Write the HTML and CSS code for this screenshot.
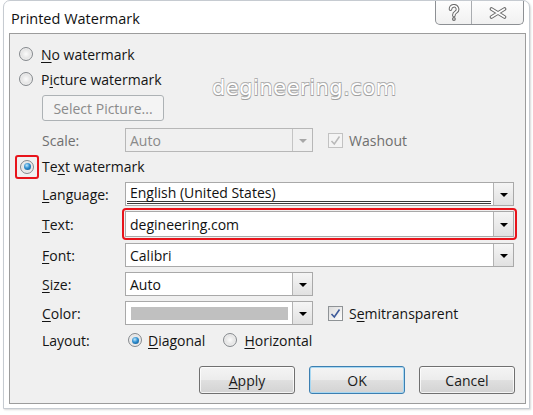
FILE: index.html
```html
<!DOCTYPE html>
<html>
<head>
<meta charset="utf-8">
<link rel="stylesheet" href="styles.css">
</head>
<body>
<div class="window">
  <div class="titlebar">
    <div class="title">Printed Watermark</div>
    <div class="caption">
      <div class="cap-btn help">
        <svg width="14" height="18" viewBox="0 0 14 18">
          <g fill="none" stroke-linecap="round" stroke-linejoin="round">
            <path d="M3.5 5.2 a3.5 3.4 0 1 1 5.2 3 c-1.4 .8 -1.8 1.5 -1.8 2.8 v.6" stroke="#6a6a6a" stroke-width="3.6"/>
            <path d="M3.5 5.2 a3.5 3.4 0 1 1 5.2 3 c-1.4 .8 -1.8 1.5 -1.8 2.8 v.6" stroke="#fff" stroke-width="1.6"/>
          </g>
          <circle cx="6.9" cy="15" r="1.9" fill="#6a6a6a"/>
          <circle cx="6.9" cy="15" r="0.8" fill="#fff"/>
        </svg>
      </div>
      <div class="cap-btn close">
        <svg width="18" height="12" viewBox="0 0 18 12">
          <g fill="none" stroke-linecap="round">
            <path d="M2.5 2 L15.5 10 M15.5 2 L2.5 10" stroke="#6a6a6a" stroke-width="3.6"/>
            <path d="M2.5 2 L15.5 10 M15.5 2 L2.5 10" stroke="#fff" stroke-width="1.6"/>
          </g>
        </svg>
      </div>
    </div>
  </div>
  <div class="client">
    <div class="watermark">degineering.com</div>

    <div class="row radio-row first">
      <span class="radio"></span><span class="lbl"><u>N</u>o watermark</span>
    </div>
    <div class="row radio-row second">
      <span class="radio"></span><span class="lbl">P<u>i</u>cture watermark</span>
    </div>
    <div class="row btn-row">
      <span class="btn disabled">Select Picture...</span>
    </div>
    <div class="row field-row scale">
      <span class="flabel dis">Scale:</span>
      <div class="combo short disabled">
        <span class="value">Auto</span>
        <span class="dd"><span class="tri"></span></span>
      </div>
      <span class="check disabled">
        <svg width="11" height="11" viewBox="0 0 11 11"><path d="M1.5 6 L4.3 9 L9.5 1.5" fill="none" stroke="#b9b9b9" stroke-width="1.5"/></svg>
      </span>
      <span class="clabel dis">Washout</span>
    </div>
    <div class="row radio-row textwm">
      <span class="redbox"><span class="radio on"></span></span><span class="lbl">Te<u>x</u>t watermark</span>
    </div>
    <div class="row field-row lang">
      <span class="flabel"><u>L</u>anguage:</span>
      <div class="combo wide">
        <span class="value dbl">English (United States)</span>
        <span class="dd"><span class="tri"></span></span>
      </div>
    </div>
    <div class="row field-row txt">
      <span class="flabel narrow"><u>T</u>ext:</span>
      <div class="redwrap">
        <div class="combo wide tall">
          <span class="value">degineering.com</span>
          <span class="dd"><span class="tri"></span></span>
        </div>
      </div>
    </div>
    <div class="row field-row font">
      <span class="flabel"><u>F</u>ont:</span>
      <div class="combo wide">
        <span class="value">Calibri</span>
        <span class="dd"><span class="tri"></span></span>
      </div>
    </div>
    <div class="row field-row size">
      <span class="flabel"><u>S</u>ize:</span>
      <div class="combo short">
        <span class="value">Auto</span>
        <span class="dd"><span class="tri"></span></span>
      </div>
    </div>
    <div class="row field-row color">
      <span class="flabel"><u>C</u>olor:</span>
      <div class="combo short">
        <span class="swatch"></span>
        <span class="dd"><span class="tri"></span></span>
      </div>
      <span class="check">
        <svg width="11" height="11" viewBox="0 0 11 11"><path d="M1.5 6 L4.3 9 L9.5 1.5" fill="none" stroke="#3d5a9a" stroke-width="1.6"/></svg>
      </span>
      <span class="clabel">S<u>e</u>mitransparent</span>
    </div>
    <div class="row field-row layout">
      <span class="flabel">Layout:</span>
      <span class="radio on lay1"></span><span class="lbl"><u>D</u>iagonal</span>
      <span class="radio lay2"></span><span class="lbl"><u>H</u>orizontal</span>
    </div>
    <div class="row buttons">
      <span class="btn"><u>A</u>pply</span>
      <span class="btn default">OK</span>
      <span class="btn">Cancel</span>
    </div>
  </div>
</div>
</body>
</html>
```

FILE: styles.css
```css
* { box-sizing: border-box; }
html, body { margin: 0; padding: 0; }
body {
  background: #ffffff;
  font-family: "Open Sans", "Noto Sans", sans-serif;
  font-size: 14px;
  color: #141414;
  width: 533px;
  height: 415px;
  overflow: hidden;
}
u { text-decoration: underline; text-underline-offset: 2px; text-decoration-thickness: 1px; }

.window {
  margin-left: 3px;
  width: 527px;
  height: 409px;
  border: 1px solid #c6cbd1;
  border-radius: 7px 7px 0 0;
  background: #ffffff;
  padding: 0 3px 4px 5px;
  display: flex;
  flex-direction: column;
  box-shadow: 1px 1px 2px rgba(0,0,0,0.15);
}

.titlebar {
  height: 32px;
  display: flex;
  align-items: flex-start;
  flex: none;
}
.title {
  font-size: 14.5px;
  line-height: 20px;
  padding-top: 8px;
  padding-left: 2px;
  color: #111;
}
.caption {
  margin-left: auto;
  margin-right: 2px;
  display: flex;
  height: 24px;
  border: 1px solid #8d9094;
  border-top: none;
  border-radius: 0 0 5px 5px;
  background: linear-gradient(#fdfdfd, #f1f1f1);
}
.cap-btn {
  display: flex;
  align-items: center;
  justify-content: center;
}
.cap-btn.help { width: 36px; border-right: 1px solid #a9acb0; }
.cap-btn.close { width: 51px; }

.client {
  flex: 1;
  position: relative;
  border: 1px solid #9c9c9c;
  background: #f0f0f0;
  display: flex;
  flex-direction: column;
}

.watermark {
  position: absolute;
  left: 202px;
  top: 42px;
  font-family: "DejaVu Sans", sans-serif;
  font-size: 21px;
  letter-spacing: 0.5px;
  color: #ffffff;
  text-shadow: 0.6px 0.6px 0 #a0a0a0, -0.6px -0.6px 0 #b4b4b4, 0.6px -0.6px 0 #aaaaaa, -0.6px 0.6px 0 #aaaaaa;
}

.row { display: flex; align-items: center; flex: none; }

.radio-row { height: 20px; padding-left: 9px; }
.radio-row.first { margin-top: 10px; }
.radio-row.second { margin-top: 5px; }
.radio-row .radio { margin-right: 8px; }

.radio {
  width: 14px;
  height: 14px;
  border-radius: 50%;
  border: 1px solid #868a8e;
  background: radial-gradient(circle at 50% 50%, #fbfbfb 0%, #e4e4e4 55%, #c6c6c6 100%);
  box-shadow: inset 0 0 0 1px rgba(255,255,255,0.5);
  display: inline-flex;
  align-items: center;
  justify-content: center;
  flex: none;
}
.radio.on::after {
  content: "";
  width: 7px;
  height: 7px;
  border-radius: 50%;
  background: radial-gradient(circle at 40% 35%, #bfe6fb 0%, #2f8fd0 45%, #0d4a80 100%);
}

.textwm { margin-top: 2px; height: 25px; }
.redbox {
  margin-left: -4px;
  margin-right: 3px;
  border: 2px solid #e8141b;
  border-radius: 3px;
  padding: 3px 3px;
  display: flex;
}
.redbox .radio { margin: 0; }

.btn-row { margin-top: 6px; padding-left: 32px; height: 26px; }

.btn {
  height: 28px;
  width: 96px;
  border: 1px solid #707070;
  border-radius: 3px;
  background: linear-gradient(#f4f4f4 0%, #ececec 48%, #dfdfdf 52%, #d3d3d3 100%);
  box-shadow: inset 0 0 0 1px rgba(255,255,255,0.75);
  display: flex;
  align-items: center;
  justify-content: center;
  color: #1b1b1b;
}
.btn.disabled {
  height: 26px;
  width: 122px;
  border-color: #adb2b5;
  background: #f4f4f4;
  color: #8b8b8b;
  box-shadow: none;
}
.btn.default {
  border-color: #3c7fb1;
  box-shadow: inset 0 0 0 1px #a8d8f2;
}

.field-row { height: 24px; padding-left: 32px; }
.flabel { width: 83px; flex: none; }
.flabel.narrow { width: 80px; }
.dis { color: #6f6f6f; }

.scale { margin-top: 7px; }
.lang { margin-top: 3px; }
.txt { margin-top: 2px; height: 32px; }
.font { margin-top: 3px; }
.size { margin-top: 5px; }
.color { margin-top: 5px; }
.layout { margin-top: 5px; height: 20px; }

.combo {
  height: 24px;
  border: 1px solid #a9a9a9;
  background: #ffffff;
  display: flex;
  align-items: stretch;
  flex: none;
}
.combo.wide { width: 389px; }
.combo.short { width: 188px; }
.combo.tall { height: 26px; }
.combo .value {
  flex: 1;
  display: flex;
  align-items: center;
  padding-left: 4px;
  color: #111;
}
.combo .value.dbl {
  margin: 0 2px 1px 1px;
  padding-left: 3px;
  border-bottom: 3px double #3a3a3a;
}
.combo.disabled {
  background: #f0f0f0;
  border-color: #b7b7b7;
}
.combo.disabled .value { color: #8a8a8a; }
.dd {
  width: 20px;
  flex: none;
  border-left: 1px solid #b3b3b3;
  background: linear-gradient(#f5f5f5, #e1e1e1);
  display: flex;
  align-items: center;
  justify-content: center;
}
.tri {
  width: 0;
  height: 0;
  border-left: 4px solid transparent;
  border-right: 4px solid transparent;
  border-top: 4px solid #000;
  margin-top: 1px;
}
.combo.disabled .dd { background: #f0f0f0; border-left-color: #c4c4c4; }
.combo.disabled .tri { border-top-color: #a7a7a7; }

.swatch {
  flex: 1;
  margin: 5px 4px 4px 5px;
  background: #c0c0c0;
}

.redwrap {
  border: 2px solid #e8141b;
  border-radius: 4px;
  padding: 1px;
}

.check {
  width: 15px;
  height: 15px;
  margin-left: 15px;
  margin-right: 6px;
  border: 1px solid #8f9396;
  background: linear-gradient(135deg, #dcdcdc, #fdfdfd);
  display: flex;
  align-items: center;
  justify-content: center;
  flex: none;
}
.check.disabled { border-color: #c2c2c2; background: #f4f4f4; }
.clabel { white-space: nowrap; }

.layout .lay1 { margin-left: 3px; margin-right: 6px; }
.layout .lay2 { margin-left: 18px; margin-right: 7px; }

.buttons {
  margin-top: 16px;
  justify-content: flex-end;
  gap: 14px;
  padding-right: 10px;
}
```
